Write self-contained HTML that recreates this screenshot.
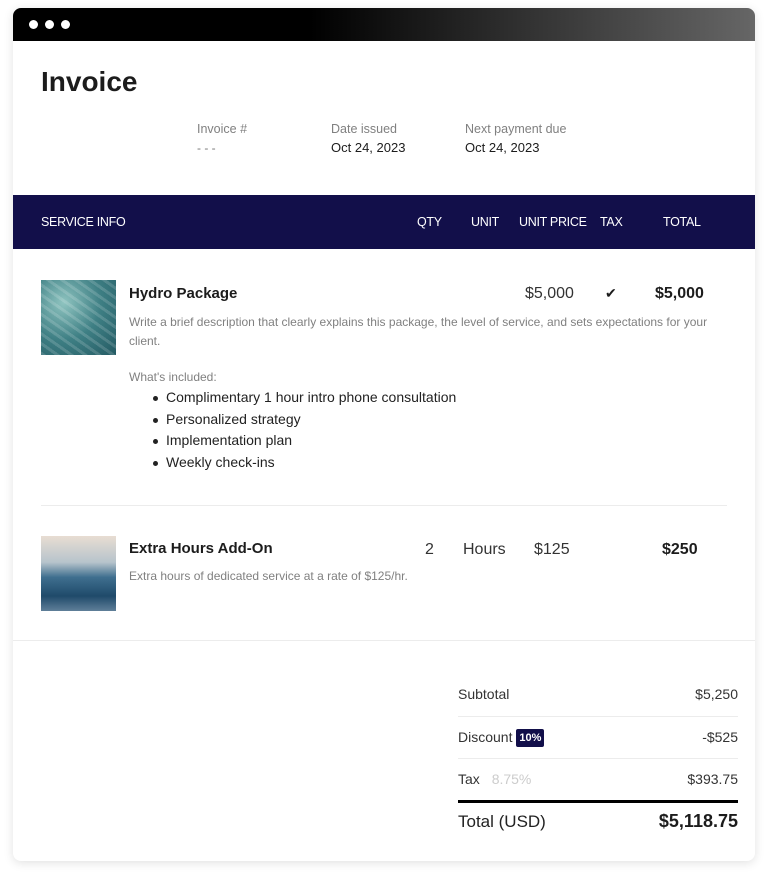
<!DOCTYPE html>
<html><head><style>
*{margin:0;padding:0;box-sizing:border-box}
body{width:768px;height:879px;background:#fff;font-family:"Liberation Sans",sans-serif;color:#1c1c1c;position:relative;overflow:hidden}
.card{position:absolute;left:13px;top:8px;width:742px;height:853px;background:#fff;border-radius:8px;box-shadow:0 2px 10px rgba(0,0,0,.12);overflow:hidden}
.bar{position:absolute;left:0;top:0;width:742px;height:33px;background:linear-gradient(90deg,#000 0%,#000 40%,#222 60%,#666 100%)}
.dot{position:absolute;top:12px;width:9px;height:9px;border-radius:50%;background:#fff}
.a{position:absolute;white-space:nowrap}
.g{color:#808080;font-size:12px}
.band{position:absolute;left:0;top:187px;width:742px;height:54px;background:#120f4a;color:#fff;font-size:12.5px;letter-spacing:-0.3px}
.line{position:absolute;height:1px;background:#ececec}
ul{list-style:none}
li{position:relative;padding-left:13px}
li:before{content:"";position:absolute;left:0;top:9px;width:5px;height:5px;border-radius:50%;background:#222}
</style></head><body>
<div class="card">
<div class="bar"></div>
<div class="dot" style="left:16px"></div><div class="dot" style="left:32px"></div><div class="dot" style="left:48px"></div>
<div class="a" style="left:28px;top:58px;font-size:28px;font-weight:bold">Invoice</div>
<div class="a g" style="left:184px;top:114px;font-size:12.5px">Invoice #</div>
<div class="a" style="left:184px;top:133px;font-size:12px;color:#777">- - -</div>
<div class="a g" style="left:318px;top:114px;font-size:12.5px">Date issued</div>
<div class="a" style="left:318px;top:132px;font-size:13px">Oct 24, 2023</div>
<div class="a g" style="left:452px;top:114px;font-size:12.5px">Next payment due</div>
<div class="a" style="left:452px;top:132px;font-size:13px">Oct 24, 2023</div>
<div class="band">
<div class="a" style="left:28px;top:20px">SERVICE INFO</div>
<div class="a" style="left:404px;top:20px">QTY</div>
<div class="a" style="left:458px;top:20px">UNIT</div>
<div class="a" style="left:506px;top:20px">UNIT PRICE</div>
<div class="a" style="left:587px;top:20px">TAX</div>
<div class="a" style="left:650px;top:20px">TOTAL</div>
</div>
<div class="a" style="left:28px;top:272px;width:75px;height:75px;background:repeating-linear-gradient(35deg,rgba(255,255,255,.15) 0 3px,transparent 3px 8px),radial-gradient(circle at 30% 30%,#8fc4c0,#3e7f84 50%,#245a63)"></div>
<div class="a" style="left:116px;top:277px;font-size:15px;font-weight:bold">Hydro Package</div>
<div class="a" style="left:512px;top:277px;font-size:16px;color:#333">$5,000</div>
<div class="a" style="left:592px;top:277px;font-size:14px">✔</div>
<div class="a" style="left:642px;top:277px;font-size:16px;font-weight:bold">$5,000</div>
<div class="a g" style="left:116px;top:305px;line-height:19px;white-space:normal;width:590px">Write a brief description that clearly explains this package, the level of service, and sets expectations for your client.</div>
<div class="a g" style="left:116px;top:362px">What's included:</div>
<ul class="a" style="left:140px;top:379px;font-size:14px;line-height:21.7px;color:#222">
<li>Complimentary 1 hour intro phone consultation</li><li>Personalized strategy</li><li>Implementation plan</li><li>Weekly check-ins</li></ul>
<div class="line" style="left:28px;top:497px;width:686px"></div>
<div class="a" style="left:28px;top:528px;width:75px;height:75px;background:linear-gradient(180deg,#e8ddd2 0%,#b7c4cc 35%,#3f6f8f 55%,#1f4a6a 80%,#5f7f99 100%)"></div>
<div class="a" style="left:116px;top:532px;font-size:15px;font-weight:bold">Extra Hours Add-On</div>
<div class="a" style="left:412px;top:533px;font-size:16px;color:#333">2</div>
<div class="a" style="left:450px;top:533px;font-size:16px;color:#333">Hours</div>
<div class="a" style="left:521px;top:533px;font-size:16px;color:#333">$125</div>
<div class="a" style="left:649px;top:533px;font-size:16px;font-weight:bold">$250</div>
<div class="a g" style="left:116px;top:561px">Extra hours of dedicated service at a rate of $125/hr.</div>
<div class="line" style="left:0;top:632px;width:742px"></div>
<div class="a" style="left:445px;top:678px;font-size:14px;color:#333">Subtotal</div>
<div class="a" style="right:17px;top:678px;font-size:14px;color:#333">$5,250</div>
<div class="line" style="left:445px;top:708px;width:280px"></div>
<div class="a" style="left:445px;top:721px;font-size:14px;color:#333">Discount <span style="display:inline-block;background:#120f4a;color:#fff;font-size:11px;font-weight:bold;padding:3px 3px;border-radius:2px;vertical-align:1px">10%</span></div>
<div class="a" style="right:17px;top:721px;font-size:14px;color:#333">-$525</div>
<div class="line" style="left:445px;top:750px;width:280px"></div>
<div class="a" style="left:445px;top:763px;font-size:14px;color:#333">Tax <span style="color:#ccc;margin-left:8px">8.75%</span></div>
<div class="a" style="right:17px;top:763px;font-size:14px;color:#333">$393.75</div>
<div class="a" style="left:445px;top:792px;width:280px;height:3px;background:#000"></div>
<div class="a" style="left:445px;top:804px;font-size:17px;color:#222">Total (USD)</div>
<div class="a" style="right:17px;top:803px;font-size:18px;font-weight:bold">$5,118.75</div>
</div>
</body></html>
